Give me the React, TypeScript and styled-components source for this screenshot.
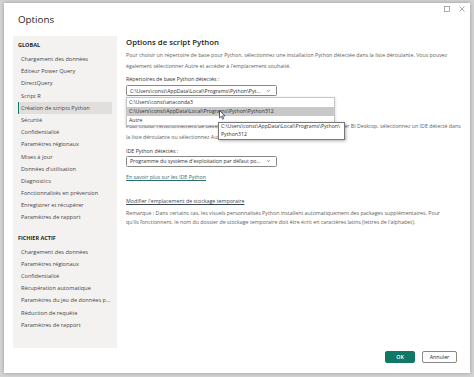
import styled, { createGlobalStyle } from 'styled-components';

const GlobalStyle = createGlobalStyle`
  html, body {
    margin: 0;
    padding: 0;
  }
  body {
    background: #d4d4d4;
    font-family: "Open Sans", "Noto Sans", sans-serif;
    color: #252423;
  }
`;

const Screen = styled.div`
  width: 474px;
  height: 377px;
  box-sizing: border-box;
  padding: 3px 4px 4px 4px;
  overflow: hidden;
`;

const Dialog = styled.div`
  width: 466px;
  height: 370px;
  background: #ffffff;
  box-shadow: 0 0 4px rgba(0, 0, 0, 0.28);
  display: flex;
  flex-direction: column;
`;

const TitleBar = styled.div`
  height: 33px;
  flex-shrink: 0;
  display: flex;
  justify-content: space-between;
  align-items: flex-start;
  padding: 0 5px 0 14px;
`;

const Title = styled.h1`
  margin: 0;
  font-size: 9.8px;
  font-weight: 400;
  line-height: 33px;
  color: #252423;
`;

const WindowButtons = styled.div`
  display: flex;
  gap: 9px;
  padding-top: 3px;
  color: #8a8886;
`;

const Body = styled.div`
  height: 312px;
  flex-shrink: 0;
  display: flex;
  padding: 0 9px;
`;

const Nav = styled.nav`
  width: 104px;
  flex-shrink: 0;
  background: #f3f2f1;
  padding-top: 3px;
  box-sizing: border-box;
`;

const NavHeader = styled.div<{ $mt?: number }>`
  margin: ${(p) => p.$mt ?? 0}px 0 2px;
  padding-left: 5px;
  height: 12px;
  line-height: 12px;
  font-size: 5.5px;
  font-weight: 700;
  color: #252423;
`;

const NavItem = styled.div<{ $active?: boolean }>`
  margin: 0 5px;
  height: 12.2px;
  line-height: 12.2px;
  padding-left: 2px;
  border-left: 1px solid ${(p) => (p.$active ? '#117865' : 'transparent')};
  background: ${(p) => (p.$active ? '#e1dfdd' : 'transparent')};
  font-size: 5.6px;
  color: #484644;
  white-space: nowrap;
  overflow: hidden;
`;

const Content = styled.section`
  position: relative;
  flex: 1;
  padding-left: 9px;
`;

const Heading = styled.h2`
  margin: 1px 0 0;
  font-size: 7.8px;
  font-weight: 600;
  line-height: 11px;
  color: #252423;
`;

const Para = styled.p<{ $mt: number; $lh: number }>`
  margin: ${(p) => p.$mt}px 0 0;
  font-size: 5.25px;
  line-height: ${(p) => p.$lh}px;
  color: #605e5c;
  white-space: nowrap;

  span {
    display: block;
  }
`;

const Label = styled.div<{ $mt: number }>`
  margin-top: ${(p) => p.$mt}px;
  font-size: 5.3px;
  line-height: 9px;
  color: #323130;
`;

const Select = styled.div<{ $mt: number }>`
  margin-top: ${(p) => p.$mt}px;
  width: 151px;
  height: 11px;
  box-sizing: border-box;
  border: 1px solid #8a8886;
  border-radius: 1.5px;
  display: flex;
  align-items: center;
  justify-content: space-between;
  padding: 0 5px 0 3px;
  font-size: 5.2px;
  color: #323130;
  white-space: nowrap;
`;

const Link = styled.a<{ $mt: number; $color: string }>`
  display: block;
  margin-top: ${(p) => p.$mt}px;
  font-size: 5.3px;
  line-height: 10px;
  color: ${(p) => p.$color};
  text-decoration: underline;
  width: max-content;
`;

const DropList = styled.div`
  position: absolute;
  left: 9px;
  top: 61px;
  width: 209px;
  background: #ffffff;
  border: 1px solid #c8c6c4;
  box-shadow: 0 1px 3px rgba(0, 0, 0, 0.2);
  box-sizing: border-box;
`;

const Option = styled.div<{ $hover?: boolean }>`
  height: 9px;
  line-height: 9px;
  padding-left: 2px;
  font-size: 5.2px;
  color: #323130;
  background: ${(p) => (p.$hover ? '#c8c8c8' : 'transparent')};
  white-space: nowrap;
`;

const Tooltip = styled.div`
  position: absolute;
  left: 101px;
  top: 86px;
  width: 127px;
  box-sizing: border-box;
  padding: 0 2px 1px;
  background: #ffffff;
  border: 1px solid #767676;
  box-shadow: 1px 1px 3px rgba(0, 0, 0, 0.3);
  font-size: 5.2px;
  line-height: 7.5px;
  color: #323130;

  span {
    display: block;
  }
`;

const Cursor = styled.svg`
  position: absolute;
  left: 102px;
  top: 74px;
`;

const Footer = styled.div`
  flex: 1;
  display: flex;
  justify-content: flex-end;
  align-items: flex-start;
  gap: 7px;
  padding: 3px 13px 0;
`;

const Button = styled.button<{ $primary?: boolean }>`
  height: 12px;
  min-width: ${(p) => (p.$primary ? 30 : 35)}px;
  padding: 0 4px;
  border-radius: 2px;
  border: 1px solid ${(p) => (p.$primary ? '#117865' : '#8a8886')};
  background: ${(p) => (p.$primary ? '#117865' : '#ffffff')};
  color: ${(p) => (p.$primary ? '#ffffff' : '#252423')};
  font-family: inherit;
  font-size: 5.3px;
  font-weight: ${(p) => (p.$primary ? 600 : 400)};
  line-height: 10px;
`;

function Chevron() {
  return (
    <svg width="5" height="4" viewBox="0 0 5 4">
      <path d="M1 1.2 L2.5 2.7 L4 1.2" fill="none" stroke="#605e5c" strokeWidth="0.7" />
    </svg>
  );
}

const globalItems = [
  'Chargement des données',
  'Éditeur Power Query',
  'DirectQuery',
  'Script R',
  'Création de scripts Python',
  'Sécurité',
  'Confidentialité',
  'Paramètres régionaux',
  'Mises à jour',
  "Données d'utilisation",
  'Diagnostics',
  'Fonctionnalités en préversion',
  'Enregistrer et récupérer',
  'Paramètres de rapport',
];

const fileItems = [
  'Chargement des données',
  'Paramètres régionaux',
  'Confidentialité',
  'Récupération automatique',
  'Paramètres du jeu de données p...',
  'Réduction de requête',
  'Paramètres de rapport',
];

export default function App() {
  return (
    <>
      <GlobalStyle />
      <Screen>
        <Dialog>
          <TitleBar>
            <Title>Options</Title>
            <WindowButtons>
              <svg width="6" height="6" viewBox="0 0 6 6">
                <rect x="0.5" y="0.5" width="5" height="5" fill="none" stroke="#8a8886" strokeWidth="0.7" />
              </svg>
              <svg width="6" height="6" viewBox="0 0 6 6">
                <path d="M0.5 0.5 L5.5 5.5 M5.5 0.5 L0.5 5.5" stroke="#8a8886" strokeWidth="0.7" />
              </svg>
            </WindowButtons>
          </TitleBar>

          <Body>
            <Nav>
              <NavHeader>GLOBAL</NavHeader>
              {globalItems.map((item) => (
                <NavItem key={item} $active={item === 'Création de scripts Python'}>
                  {item}
                </NavItem>
              ))}
              <NavHeader $mt={8}>FICHIER ACTIF</NavHeader>
              {fileItems.map((item) => (
                <NavItem key={item}>{item}</NavItem>
              ))}
            </Nav>

            <Content>
              <Heading>Options de script Python</Heading>
              <Para $mt={2.2} $lh={11}>
                <span>
                  Pour choisir un répertoire de base pour Python, sélectionnez une installation Python détectée dans la liste déroulante. Vous pouvez
                </span>
                <span>également sélectionner Autre et accéder à l'emplacement souhaité.</span>
              </Para>
              <Label $mt={2.8}>Répertoires de base Python détectés :</Label>
              <Select $mt={1.5}>
                <span>{'C:\\Users\\const\\AppData\\Local\\Programs\\Python\\Pyt...'}</span>
                <Chevron />
              </Select>
              <Para $mt={24.6} $lh={10.7}>
                <span>
                  Pour choisir l'environnement de développement intégré (IDE) Python à lancer depuis Power BI Desktop, sélectionnez un IDE détecté dans
                </span>
                <span>la liste déroulante ou sélectionnez Autre pour accéder à un autre IDE sur votre ordinateur.</span>
              </Para>
              <Label $mt={4.5}>IDE Python détectés :</Label>
              <Select $mt={0}>
                <span>Programme du système d'exploitation par défaut po...</span>
                <Chevron />
              </Select>
              <Link $mt={5} $color="#2c6e73">
                En savoir plus sur les IDE Python
              </Link>
              <Link $mt={14} $color="#3b4650">
                Modifier l'emplacement de stockage temporaire
              </Link>
              <Para $mt={2.7} $lh={9.5}>
                <span>
                  Remarque : Dans certains cas, les visuels personnalisés Python installent automatiquement des packages supplémentaires. Pour
                </span>
                <span>
                  qu'ils fonctionnent, le nom du dossier de stockage temporaire doit être écrit en caractères latins (lettres de l'alphabet).
                </span>
              </Para>

              <DropList>
                <Option>{'C:\\Users\\const\\anaconda3'}</Option>
                <Option $hover>{'C:\\Users\\const\\AppData\\Local\\Programs\\Python\\Python312'}</Option>
                <Option>Autre</Option>
              </DropList>
              <Tooltip>
                <span>{'C:\\Users\\const\\AppData\\Local\\Programs\\Python\\'}</span>
                <span>Python312</span>
              </Tooltip>
              <Cursor width="7" height="10" viewBox="0 0 7 10">
                <path d="M0.5 0.5 L0.5 8 L2.3 6.3 L3.6 9.2 L4.7 8.7 L3.5 5.9 L6 5.9 Z" fill="#ffffff" stroke="#000000" strokeWidth="0.6" />
              </Cursor>
            </Content>
          </Body>

          <Footer>
            <Button $primary>OK</Button>
            <Button>Annuler</Button>
          </Footer>
        </Dialog>
      </Screen>
    </>
  );
}
